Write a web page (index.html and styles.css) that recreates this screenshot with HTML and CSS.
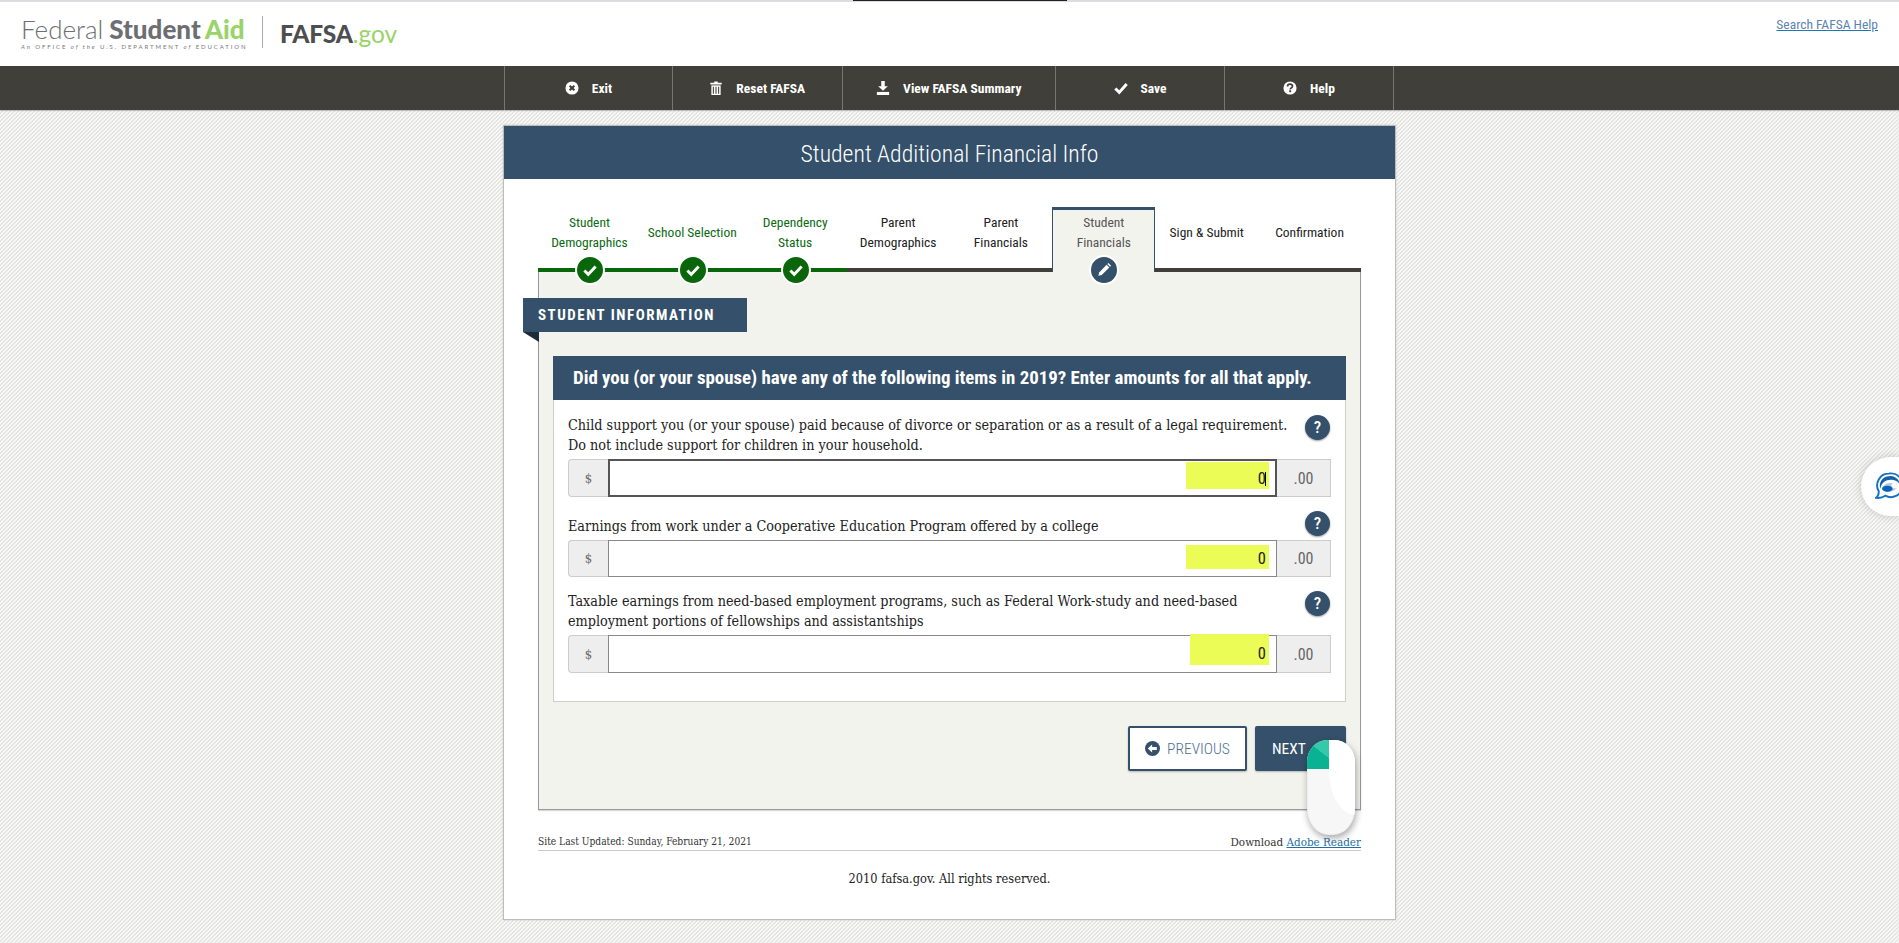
FILE: index.html
```html
<!DOCTYPE html>
<html lang="en">
<head>
<meta charset="utf-8">
<title>FAFSA - Student Additional Financial Info</title>
<link rel="stylesheet" href="styles.css">
</head>
<body>
<div class="topline"><span class="topline-tab"></span></div>
<header class="site-header">
  <div class="logo">
    <div class="fsa">
      <div class="fsa-name"><span class="fsa-federal">Federal</span><span class="fsa-student">Student</span><span class="fsa-aid">Aid</span></div>
      <div class="fsa-sub"><i>An</i> OFFICE <i>of the</i> U.S. DEPARTMENT <i>of</i> EDUCATION</div>
    </div>
    <div class="logo-rule"></div>
    <div class="fafsa"><span class="fafsa-main">FAFSA</span><span class="fafsa-gov">.gov</span></div>
  </div>
  <a class="search-help" href="#">Search FAFSA Help</a>
</header>
<nav class="toolbar">
  <div class="toolbar-inner">
    <a class="tool" href="#"><svg class="tool-icon" viewBox="0 0 16 16"><circle cx="8" cy="8" r="7.5" fill="#fff"/><path d="M5.3 5.3l5.4 5.4M10.7 5.3l-5.4 5.4" stroke="#403f39" stroke-width="2.4"/></svg>Exit</a>
    <a class="tool" href="#"><svg class="tool-icon" viewBox="0 0 16 16"><path d="M6 .5h4v1.5h4.5v2h-13V2H6z" fill="#fff"/><path d="M2.7 5h10.6v11H2.7z" fill="#fff"/><path d="M5 6.5v8M8 6.5v8M11 6.5v8" stroke="#403f39" stroke-width="1.2"/></svg>Reset FAFSA</a>
    <a class="tool" href="#"><svg class="tool-icon" viewBox="0 0 16 16"><path d="M6 0h4v6h3.5L8 11 2.5 6H6z" fill="#fff"/><path d="M1 12.5h14V16H1z" fill="#fff"/></svg>View FAFSA Summary</a>
    <a class="tool" href="#"><svg class="tool-icon" viewBox="0 0 16 16"><path d="M1.5 8.5l4.5 4.5 8.5-9.5" fill="none" stroke="#fff" stroke-width="3.4"/></svg>Save</a>
    <a class="tool" href="#"><svg class="tool-icon" viewBox="0 0 16 16"><circle cx="8" cy="8" r="7.5" fill="#fff"/><path d="M5.2 6.2c0-1.6 1.3-2.5 2.8-2.5s2.8.9 2.8 2.3c0 1.9-2.5 1.9-2.5 3.7" fill="none" stroke="#403f39" stroke-width="2"/><rect x="7.1" y="10.6" width="2.2" height="2.2" fill="#403f39"/></svg>Help</a>
  </div>
</nav>

<main class="card">
  <h1 class="card-title">Student Additional Financial Info</h1>
  <div class="card-body">
    <ol class="steps">
      <li class="step step-done"><span class="step-label">Student<br>Demographics</span><span class="step-dot"><svg viewBox="0 0 16 16"><path d="M3 8.5l3.4 3.4L13 4.8" fill="none" stroke="#fff" stroke-width="2.6"/></svg></span></li>
      <li class="step step-done"><span class="step-label">School Selection</span><span class="step-dot"><svg viewBox="0 0 16 16"><path d="M3 8.5l3.4 3.4L13 4.8" fill="none" stroke="#fff" stroke-width="2.6"/></svg></span></li>
      <li class="step step-done"><span class="step-label">Dependency<br>Status</span><span class="step-dot"><svg viewBox="0 0 16 16"><path d="M3 8.5l3.4 3.4L13 4.8" fill="none" stroke="#fff" stroke-width="2.6"/></svg></span></li>
      <li class="step"><span class="step-label">Parent<br>Demographics</span></li>
      <li class="step"><span class="step-label">Parent<br>Financials</span></li>
      <li class="step step-active"><span class="step-label">Student<br>Financials</span><span class="step-dot"><svg viewBox="0 0 16 16"><path d="M3 13.2l.7-3 6.6-6.8 2.4 2.4-6.7 6.7z" fill="#fff"/><path d="M11 2.7l.9-.9 2.4 2.4-.9.9z" fill="#fff"/></svg></span></li>
      <li class="step"><span class="step-label">Sign &amp; Submit</span></li>
      <li class="step"><span class="step-label">Confirmation</span></li>
    </ol>
    <section class="panel">
      <h2 class="ribbon">STUDENT INFORMATION</h2>
      <div class="form-block">
        <h3 class="form-title">Did you (or your spouse) have any of the following items in 2019? Enter amounts for all that apply.</h3>
        <div class="form-box">
          <div class="field">
            <div class="question"><p>Child support you (or your spouse) paid because of divorce or separation or as a result of a legal requirement.<br>Do not include support for children in your household.</p><span class="help">?</span></div>
            <div class="amount">
              <span class="addon addon-left">$</span>
              <div class="amount-input amount-input-focus"><span class="mark mark-one">0<i class="caret"></i></span></div>
              <span class="addon addon-right">.00</span>
            </div>
          </div>
          <div class="field">
            <div class="question"><p>Earnings from work under a Cooperative Education Program offered by a college</p><span class="help">?</span></div>
            <div class="amount amount-short">
              <span class="addon addon-left">$</span>
              <div class="amount-input"><span class="mark mark-two">0</span></div>
              <span class="addon addon-right">.00</span>
            </div>
          </div>
          <div class="field">
            <div class="question"><p>Taxable earnings from need-based employment programs, such as Federal Work-study and need-based<br>employment portions of fellowships and assistantships</p><span class="help">?</span></div>
            <div class="amount">
              <span class="addon addon-left">$</span>
              <div class="amount-input"><span class="mark mark-three">0</span></div>
              <span class="addon addon-right">.00</span>
            </div>
          </div>
        </div>
      </div>
      <div class="actions">
        <a class="btn btn-prev" href="#"><svg class="btn-icon" viewBox="0 0 16 16"><circle cx="8" cy="8" r="8" fill="#34506a"/><path d="M3 8l4.600-4.200V6.400h5v3.200h-5v2.600z" fill="#fff"/></svg>PREVIOUS</a>
        <a class="btn btn-next" href="#">NEXT</a>
        <div class="mouse-overlay"><span class="mouse-left"></span><span class="mouse-shine"></span></div>
      </div>
    </section>
    <div class="meta">
      <span class="meta-updated">Site Last Updated: Sunday, February 21, 2021</span>
      <span class="meta-download">Download <a href="#">Adobe Reader</a></span>
    </div>
    <p class="copyright">2010 fafsa.gov. All rights reserved.</p>
  </div>
</main>

<aside class="chat-widget">
  <svg class="chat-icon" viewBox="0 0 26 26"><path d="M13 1a11 11 0 0 0-9.500 16.500C3.500 20 2.500 22.500 1 23.500c3.500.4 6.500-.5 8.500-2A11 11 0 1 0 13 1z" fill="#fff" stroke="#1273c4" stroke-width="1.800"/><path d="M13 3.500a8.500 8.500 0 0 0-8 11.500C6 9 11 6 17 7c3 .5 5 2 6 4a8.500 8.500 0 0 0-10-7.500z" fill="#1560a8"/><path d="M6 15c2-4 6-6 10-5l-1 2a4 4 0 0 0 5 2.500c-2.500 3-5 3.500-8 3.500s-5-1.500-6-3z" fill="#a7c9e8"/><ellipse cx="11.500" cy="15" rx="4.800" ry="2.800" fill="#0d62b5"/></svg>
</aside>
</body>
</html>
```
FILE: styles.css
```css
* { box-sizing: border-box; }
html, body { margin: 0; padding: 0; }
body {
  height: 943px;
  overflow: hidden;
  position: relative;
  background-color: #f7f7f6;
  background-image: linear-gradient(135deg, #e5e5e3 25%, #f8f8f7 25%, #f8f8f7 50%, #e5e5e3 50%, #e5e5e3 75%, #f8f8f7 75%);
  background-size: 4px 4px;
  font-family: "DejaVu Serif", serif;
  font-stretch: condensed;
  color: #222;
}
a { color: #1f6fa5; }

.topline { height: 2px; background: #dcdce2; display: flex; justify-content: center; }
.topline-tab { width: 214px; height: 1px; margin-left: 21px; background: #222; }

.site-header {
  height: 64px;
  background: #fff;
  display: flex;
  justify-content: space-between;
  padding: 0 21px 0 21px;
}
.logo { display: flex; align-items: flex-start; padding-top: 14px; }
.fsa { width: 226px; font-family: Lato, "Liberation Sans", sans-serif; font-stretch: normal; }
.fsa-name { font-size: 26px; line-height: 26px; white-space: nowrap; height: 26px; }
.fsa-federal { color: #6d6e71; font-weight: 300; margin-right: 6px; }
.fsa-student { color: #6d6e71; font-weight: 900; margin-right: 4px; }
.fsa-aid { color: #9ad36a; font-weight: 900; }
.fsa-sub { font-size: 6px; line-height: 10px; letter-spacing: 1.900px; color: #77787b; white-space: nowrap; }
.logo-rule { width: 1px; height: 32px; background: #aaa; margin: 0 17px 0 15px; }
.fafsa { font-family: Lato, "Liberation Sans", sans-serif; font-stretch: normal; font-size: 24.500px; line-height: 34px; margin-top: 1px; white-space: nowrap; }
.fafsa-main { color: #4d4e50; font-weight: 900; letter-spacing: -.2px; }
.fafsa-gov { color: #9ad36a; }
.search-help {
  font-family: Roboto, sans-serif;
  font-stretch: 75%;
  font-size: 13.500px;
  line-height: 16px;
  margin-top: 14px;
  color: #5b83b5;
  text-decoration-color: #1f7ab0;
}

.toolbar { height: 44px; padding-right: 1px; background: #403f39; box-shadow: 0 1px 1px rgba(0,0,0,.2); }
.toolbar-inner {
  width: 890px;
  height: 44px;
  margin: 0 auto;
  display: grid;
  grid-template-columns: 168px 169.500px 213.500px 169px 169px;
  border-left: 1px solid #77766f;
}
.tool {
  display: flex;
  align-items: center;
  justify-content: center;
  gap: 13px;
  border-right: 1px solid #77766f;
  color: #fff;
  text-decoration: none;
  font-family: Roboto, sans-serif;
  font-stretch: 75%;
  font-weight: 700;
  font-size: 13.500px;
}
.tool-icon { width: 14px; height: 14px; flex: none; }

.card {
  width: 893px;
  height: 795px;
  margin: 15px auto 0;
  background: #fff;
  border: 1px solid #bdbdbd;
  box-shadow: 0 0 2px rgba(0,0,0,.15);
}
.card-title {
  margin: 0;
  height: 53px;
  line-height: 56px;
  background: #34506a;
  color: #fff;
  text-align: center;
  font-family: Roboto, sans-serif;
  font-stretch: 75%;
  font-weight: 300;
  font-size: 23.700px;
}
.card-body { padding: 28px 34px 0; }

.steps {
  list-style: none;
  margin: 0;
  padding: 0;
  display: grid;
  grid-template-columns: repeat(8, 1fr);
  height: 65px;
  font-family: Roboto, sans-serif;
  font-stretch: 75%;
  font-size: 13.500px;
  line-height: 19.500px;
}
.step {
  position: relative;
  display: flex;
  flex-direction: column;
  align-items: center;
  justify-content: flex-start;
  height: 65px;
  border-bottom: 4px solid #403f39;
  color: #222;
  text-align: center;
}
.step::after {
  content: "";
  position: absolute;
  right: 0;
  bottom: -5px;
  width: 1px;
  height: 2px;
  background: #403f39;
}
.step-label { height: 51px; display: flex; align-items: center; justify-content: center; }
.step-done { color: #0b6a12; border-bottom-color: #0a660a; }
.step-active {
  height: 65px;
  background: #f3f3ee;
  color: #555;
  border-top: 3px solid #34506a;
  border-left: 1px solid #34506a;
  border-right: 1px solid #34506a;
  border-bottom: 0;
  z-index: 1;
}
.step-active::after { display: none; }
.step-active .step-label { height: 45px; }
.step-dot {
  position: absolute;
  left: 50%;
  bottom: -17px;
  margin-left: -14px;
  width: 30px;
  height: 30px;
  border-radius: 50%;
  border: 2px solid #fff;
  background: #0a660a;
  display: flex;
  align-items: center;
  justify-content: center;
  z-index: 2;
}
.step-dot svg { width: 18px; height: 18px; }
.step-active .step-dot { background: #34506a; bottom: -13px; margin-left: -15px; }

.panel {
  position: relative;
  height: 538px;
  background: #f3f3ee;
  border: 1px solid #9a9a9a;
  border-top: 0;
  box-shadow: 0 1px 1px rgba(0,0,0,.15);
}
.ribbon {
  position: relative;
  margin: 0 0 0 -16px;
  top: 26px;
  width: 224px;
  height: 34px;
  padding-left: 15px;
  line-height: 34px;
  background: #34506a;
  color: #fff;
  font-family: Roboto, sans-serif;
  font-stretch: 75%;
  font-weight: 700;
  font-size: 15px;
  letter-spacing: 1.500px;
}
.ribbon::after {
  content: "";
  position: absolute;
  left: 0;
  top: 34px;
  border-top: 10px solid #1c2c3b;
  border-left: 16px solid transparent;
}
.form-block { margin: 50px 14px 0; }
.form-title {
  margin: 0;
  height: 44px;
  line-height: 44px;
  padding-left: 20px;
  background: #34506a;
  color: #fff;
  font-family: Roboto, sans-serif;
  font-stretch: 75%;
  font-weight: 700;
  font-size: 18.860px;
  white-space: nowrap;
}
.form-box {
  height: 302px;
  background: #fff;
  border: 1px solid #cfcfcb;
  border-top: 0;
  padding: 15px 14px 0;
  display: flex;
  flex-direction: column;
  gap: 14px;
}
.question { display: flex; justify-content: space-between; align-items: flex-start; margin-bottom: 4px; }
.question p {
  margin: 0;
  width: 725px;
  font-size: 14.270px;
  line-height: 20px;
  color: #222;
  align-self: flex-end;
  white-space: nowrap;
}
.help {
  flex: none;
  width: 25px;
  height: 25px;
  border-radius: 50%;
  background: #34506a;
  color: #fff;
  text-align: center;
  font-family: Roboto, sans-serif;
  font-stretch: 75%;
  font-weight: 500;
  font-size: 17px;
  line-height: 25px;
  margin-right: 1px;
  box-shadow: 0 1px 2px rgba(0,0,0,.4);
}
.amount { display: flex; height: 38px; }
.amount-short { height: 37px; }
.addon {
  display: flex;
  align-items: center;
  justify-content: center;
  background: #eee;
  border: 1px solid #ccc;
  color: #666;
  font-size: 13px;
}
.addon-left { width: 40px; border-right: 0; border-radius: 4px 0 0 4px; }
.addon-right { width: 54px; border-left: 0; font-family: Roboto, sans-serif; font-stretch: 75%; font-size: 16px; }
.amount-input {
  flex: 1;
  background: #fff;
  border: 1px solid #888;
  display: flex;
  justify-content: flex-end;
  align-items: flex-start;
  padding-right: 7px;
  position: relative;
}
.amount-input-focus { border: 2px solid #555; padding-right: 6px; }
.mark {
  position: relative;
  display: flex;
  justify-content: flex-end;
  align-items: flex-end;
  background: #eafc55;
  font-family: Roboto, sans-serif;
  font-stretch: 75%;
  font-size: 16.500px;
  line-height: 16px;
  color: #222;
  padding-right: 3px;
}
.mark-one { width: 83px; height: 27px; margin-top: 1px; padding-bottom: 2px; }
.mark-two { width: 83px; height: 24px; margin-top: 4px; padding-bottom: 2px; }
.mark-three { width: 79px; height: 31px; margin-top: -2px; padding-bottom: 3px; }
.caret { position: absolute; right: 3px; top: 10px; width: 1px; height: 14px; background: #000; }

.actions {
  position: relative;
  display: flex;
  justify-content: flex-end;
  gap: 8px;
  margin: 24px 14px 0 0;
  font-family: Roboto, sans-serif;
  font-stretch: 75%;
}
.btn {
  height: 45px;
  display: flex;
  align-items: center;
  justify-content: center;
  text-decoration: none;
  font-size: 15.500px;
  font-weight: 300;
  border-radius: 2px;
  box-shadow: 0 1px 2px rgba(0,0,0,.25);
}
.btn-prev {
  width: 119px;
  gap: 7px;
  background: #fff;
  border: 2px solid #34506a;
  color: #4f6f92;
}
.btn-icon { width: 15px; height: 15px; }
.btn-next {
  width: 91px;
  justify-content: flex-start;
  padding-left: 17px;
  background: #34506a;
  color: #fff;
  font-weight: 400;
}
.mouse-overlay {
  position: absolute;
  left: 768px;
  top: 14px;
  width: 48px;
  height: 95px;
  border-radius: 20px 20px 22px 22px / 22px 22px 26px 26px;
  background: #f7f7f7;
  overflow: hidden;
  box-shadow: 1px 3px 7px rgba(0,0,0,.35), inset 0 0 2px rgba(0,0,0,.12);
  z-index: 3;
}
.mouse-left {
  position: absolute;
  left: 0;
  top: 0;
  width: 22px;
  height: 29px;
  background: linear-gradient(38deg, #09b293 0, #09b293 60%, #35c9ab 61%, #35c9ab 100%);
}
.mouse-shine {
  position: absolute;
  left: 22px;
  top: 0;
  width: 26px;
  height: 75px;
  background: #fff;
  border-bottom-left-radius: 100% 60%;
}

.meta {
  display: flex;
  justify-content: space-between;
  align-items: flex-end;
  height: 41px;
  padding-bottom: 1px;
  border-bottom: 1px solid #ccc;
  line-height: 14px;
}
.meta-updated { font-size: 10.150px; color: #333; }
.meta-download { font-size: 11.570px; color: #333; }
.meta-download a { color: #1f6fa5; }
.copyright { margin: 20px 0 0; text-align: center; font-size: 12.700px; line-height: 16px; color: #222; }

.chat-widget {
  position: absolute;
  right: 0;
  top: 457px;
  width: 38px;
  height: 59px;
  background: #fff;
  border-radius: 30px 0 0 30px;
  box-shadow: 0 0 10px rgba(0,0,0,.18);
  overflow: hidden;
}
.chat-icon { position: absolute; left: 14px; top: 15px; width: 28px; height: 29px; }
```
